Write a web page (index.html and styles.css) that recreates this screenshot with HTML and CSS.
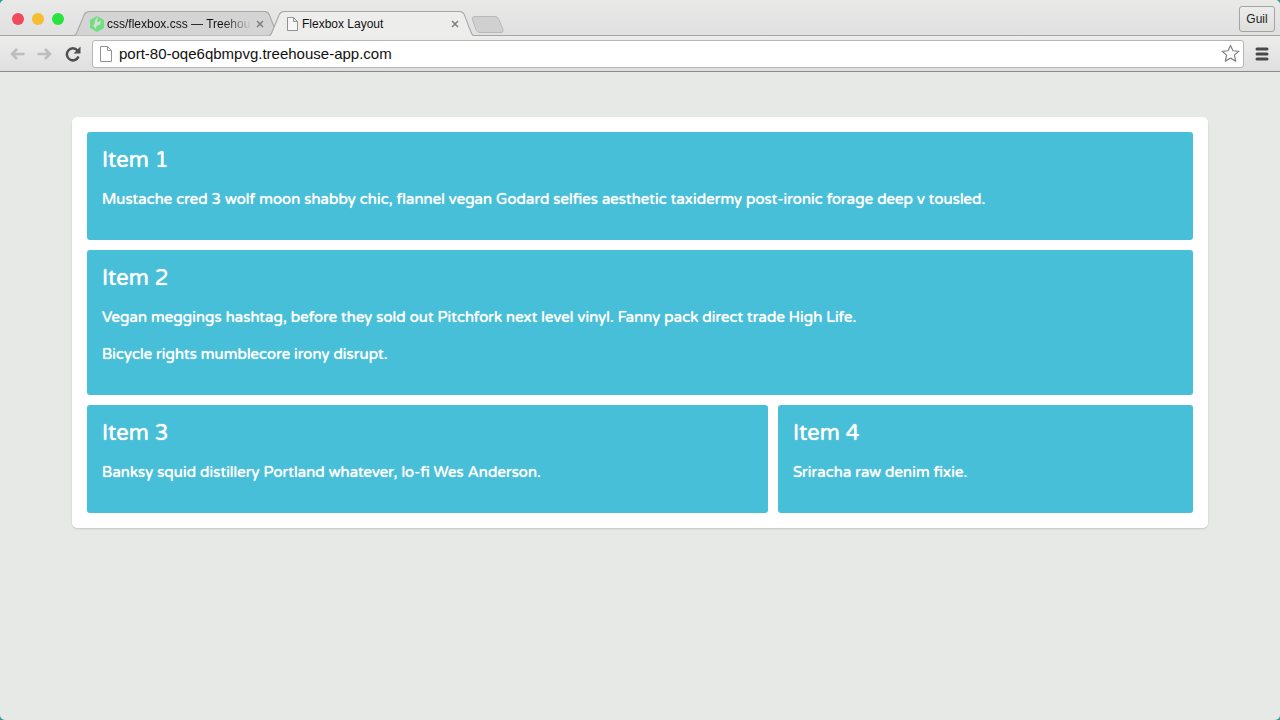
FILE: index.html
```html
<!DOCTYPE html>
<html lang="en">
<head>
    <meta charset="utf-8">
    <title>Flexbox Layout</title>
    <link rel="stylesheet" href="styles.css">
</head>
<body>
    <div class="window">
        <header class="browser">
            <div class="tab-strip">
                <div class="lights">
                    <button class="light close" aria-label="Close window"></button>
                    <button class="light minimize" aria-label="Minimize window"></button>
                    <button class="light zoom" aria-label="Zoom window"></button>
                </div>
                <div class="tabs">
                    <div class="tab">
                        <svg class="tab-shape" viewBox="0 0 200 25" preserveAspectRatio="none">
                            <path d="M0 24.500Q2 24 3 21L10 3.500Q11.500 0.500 15 0.500H186Q189 0.500 190.500 3.500L197 21Q198 24 200 24.500" fill="#d3d4d3" stroke="#a6a7a6"/>
                        </svg>
                        <svg class="favicon" viewBox="0 0 16 16">
                            <path d="M8 1 14 4.500V11.500L8 15 2 11.500V4.500z" fill="#72dd83" stroke="#72dd83" stroke-width="2" stroke-linejoin="round"/>
                            <path d="M9 0 6 4.500 5.500 8 4 9.500 7 13l.5-3 3.500-1.500 1-4L9.500 6 8 5.500z" fill="#d3e0d4"/>
                        </svg>
                        <a class="tab-title faded" href="#">css/flexbox.css — Treehou</a>
                        <button class="tab-close" aria-label="Close css/flexbox.css tab">
                            <svg viewBox="0 0 8 8"><path d="M1 1l6 6M7 1L1 7" stroke="#7d7d7d" stroke-width="1.500"/></svg>
                        </button>
                    </div>
                    <div class="tab active">
                        <svg class="tab-shape" viewBox="0 0 200 25" preserveAspectRatio="none">
                            <path d="M0 25Q2 24 3 21L10 3.500Q11.500 0.500 15 0.500H186Q189 0.500 190.500 3.500L197 21Q198 24 200 25" fill="#ededec" stroke="#a6a7a6"/>
                        </svg>
                        <svg class="favicon" viewBox="0 0 16 16">
                            <path d="M3.500 1.500h6l4 4v9h-10zM9.500 1.500v4h4" fill="#f7f7f7" stroke="#929292"/>
                        </svg>
                        <a class="tab-title" href="#">Flexbox Layout</a>
                        <button class="tab-close" aria-label="Close Flexbox Layout tab">
                            <svg viewBox="0 0 8 8"><path d="M1 1l6 6M7 1L1 7" stroke="#7d7d7d" stroke-width="1.500"/></svg>
                        </button>
                    </div>
                    <button class="new-tab" aria-label="New tab">
                        <svg viewBox="0 0 34 17">
                            <path d="M4 .5h20q3 0 4 3l4 10q1 3-2 3H9q-3 0-4-3L1.500 4Q.5 .5 4 .5z" fill="#cfd0cf" stroke="#b8b9b8"/>
                        </svg>
                    </button>
                </div>
                <button class="profile">Guil</button>
            </div>
            <div class="toolbar">
                <button class="nav-button" aria-label="Back">
                    <svg viewBox="0 0 16 16"><path d="M15.500 8H3M8 3L3 8l5 5" fill="none" stroke="#bdbdbd" stroke-width="2.500"/></svg>
                </button>
                <button class="nav-button" aria-label="Forward">
                    <svg viewBox="0 0 16 16"><path d="M.5 8H13M8 3l5 5-5 5" fill="none" stroke="#bdbdbd" stroke-width="2.500"/></svg>
                </button>
                <button class="nav-button" aria-label="Reload">
                    <svg viewBox="0 0 16 16">
                        <path d="M12.500 4.500A6 6 0 1 0 13.500 10.500" fill="none" stroke="#4f4f4f" stroke-width="2.500"/>
                        <path d="M15.500 .5v7h-7z" fill="#4f4f4f"/>
                    </svg>
                </button>
                <div class="address">
                    <svg class="page-icon" viewBox="0 0 16 16">
                        <path d="M2.500 .5h7l4 4v11h-11zM9.500 .5v4h4" fill="#fff" stroke="#929292"/>
                    </svg>
                    <input class="url" type="text" aria-label="Address" value="port-80-oqe6qbmpvg.treehouse-app.com">
                    <button class="star" aria-label="Bookmark this page">
                        <svg viewBox="0 0 20 20"><path d="M10 1.500l2.600 5.600 6.200.6-4.700 4 1.400 6.300L10 14.900l-5.500 3.100 1.400-6.300-4.700-4 6.200-.6z" fill="#fff" stroke="#858585" stroke-width="1.300" stroke-linejoin="round"/></svg>
                    </button>
                </div>
                <button class="menu" aria-label="Menu">
                    <svg viewBox="0 0 14 14"><path d="M2 2h10M2 7h10M2 12h10" stroke="#494949" stroke-width="3" stroke-linecap="round"/></svg>
                </button>
            </div>
        </header>

        <main class="page">
            <div class="container">
                <div class="item item-1">
                    <h2>Item 1</h2>
                    <p>Mustache cred 3 wolf moon shabby chic, flannel vegan Godard selfies aesthetic taxidermy post-ironic forage deep v tousled.</p>
                </div>
                <div class="item item-2">
                    <h2>Item 2</h2>
                    <p>Vegan meggings hashtag, before they sold out Pitchfork next level vinyl. Fanny pack direct trade High Life.</p>
                    <p>Bicycle rights mumblecore irony disrupt.</p>
                </div>
                <div class="item item-3">
                    <h2>Item 3</h2>
                    <p>Banksy squid distillery Portland whatever, lo-fi Wes Anderson.</p>
                </div>
                <div class="item item-4">
                    <h2>Item 4</h2>
                    <p>Sriracha raw denim fixie.</p>
                </div>
            </div>
        </main>
    </div>
</body>
</html>
```

FILE: styles.css
```css
* {
    box-sizing: border-box;
}
html {
    background: #2f9a96;
}
body {
    margin: 0;
    font-family: "Liberation Sans", Arial, sans-serif;
}
button {
    padding: 0;
    border: 0;
    background: none;
    font-family: inherit;
}
svg {
    display: block;
}
.window {
    min-height: 100vh;
    border-radius: 5px;
    background: #e7e9e6;
    overflow: hidden;
}

/* Browser chrome */
.tab-strip {
    display: flex;
    height: 36px;
    padding: 0 5px 0 12px;
    background: linear-gradient(#e9e9e8, #dfe0df);
    box-shadow: inset 0 -1px #a6a7a6;
}
.lights {
    display: flex;
    align-items: center;
    gap: 8px;
    height: 38px;
}
.light {
    width: 12px;
    height: 12px;
    border-radius: 50%;
}
.close {
    background: #f14a5d;
}
.minimize {
    background: #f5bd2f;
}
.zoom {
    background: #2be33f;
}
.tabs {
    display: flex;
    align-items: flex-end;
    flex: 1;
    padding-left: 10px;
}
.tab {
    position: relative;
    display: flex;
    align-items: center;
    width: 205px;
    height: 25px;
    padding: 0 15px;
}
.tab + .tab {
    margin-left: -10px;
}
.tab-shape {
    position: absolute;
    top: 0;
    left: 0;
    width: 100%;
    height: 100%;
}
.favicon {
    position: relative;
    width: 16px;
    height: 16px;
    margin-right: 2px;
}
.tab-title {
    position: relative;
    flex: 1;
    color: #111;
    font-size: 12px;
    white-space: nowrap;
    text-decoration: none;
}
.faded {
    -webkit-mask-image: linear-gradient(to right, #000 80%, transparent);
    mask-image: linear-gradient(to right, #000 80%, transparent);
}
.tab-close {
    position: relative;
    width: 8px;
    height: 8px;
    margin-left: 4px;
}
.new-tab {
    width: 34px;
    height: 17px;
    margin: 0 0 3px -3px;
}
.profile {
    width: 36px;
    height: 26px;
    margin-top: 6px;
    border: 1px solid #a3a4a3;
    border-radius: 3px;
    background: linear-gradient(#ededec, #dededd);
    color: #222;
    font-size: 12px;
}
.toolbar {
    display: flex;
    align-items: center;
    height: 36px;
    padding: 0 11px 0 9px;
    border-bottom: 1px solid #898b89;
    background: linear-gradient(#ededec, #dedfde);
}
.nav-button {
    width: 16px;
    height: 16px;
    margin-right: 12px;
}
.address {
    display: flex;
    align-items: center;
    flex: 1;
    height: 28px;
    margin-left: -1px;
    padding: 0 3px 0 5px;
    border: 1px solid #b5b6b5;
    border-radius: 3px;
    background: #fff;
}
.page-icon {
    width: 16px;
    height: 16px;
    margin-right: 5px;
}
.url {
    flex: 1;
    min-width: 0;
    padding: 0;
    border: 0;
    outline: 0;
    background: none;
    color: #111;
    font-family: inherit;
    font-size: 15px;
}
.star {
    width: 19px;
    height: 19px;
}
.menu {
    width: 14px;
    height: 14px;
    margin-left: 11px;
}

/* Page */
.page {
    padding: 45px 72px;
    color: #fff;
    font-family: "Varela Round", "Noto Sans", sans-serif;
}
.container {
    display: flex;
    flex-wrap: wrap;
    padding: 10px;
    border-radius: 5px;
    background: #fff;
    box-shadow: 0 1px 2px rgba(0, 0, 0, 0.15);
}
.item {
    flex: 1 1 auto;
    margin: 5px;
    padding: 16px 15px 14px;
    border-radius: 3px;
    background: #47bfd8;
    text-shadow: 0 0 1px #fff;
}
.item h2 {
    margin: 0;
    font-size: 22px;
    font-weight: 500;
    line-height: 25px;
}
.item p {
    margin: 16px 0;
    font-size: 15px;
    font-weight: 500;
    line-height: 21px;
}
.item-1,
.item-2 {
    flex-basis: 100%;
}
.item-3 {
    flex-basis: 472px;
}
.item-4 {
    flex-basis: 206px;
}
```
